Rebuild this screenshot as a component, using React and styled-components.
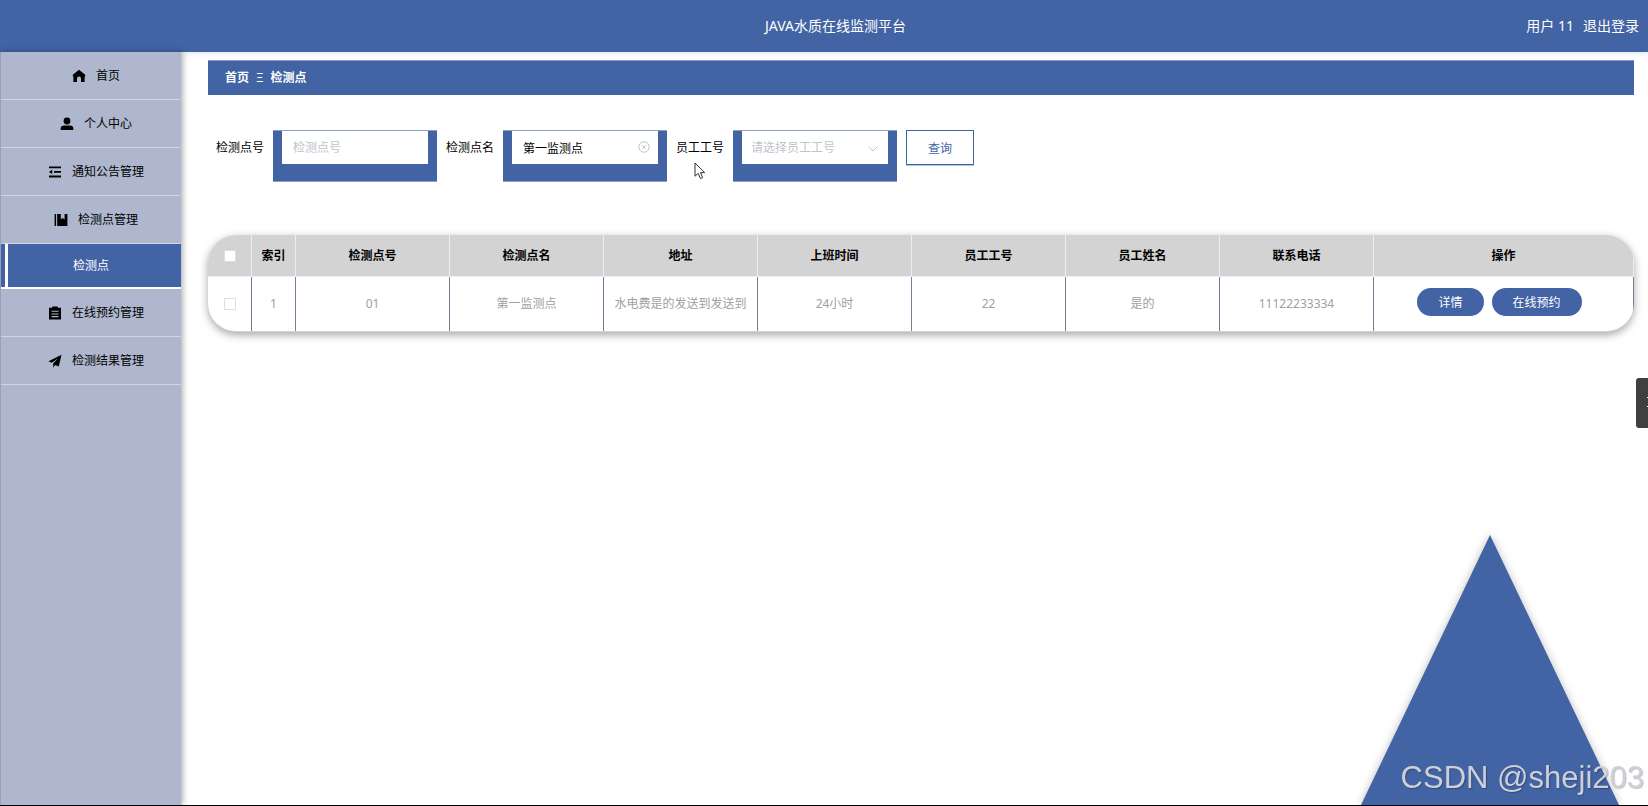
import React, { useState } from "react"
import styled, { createGlobalStyle } from "styled-components"

const BLUE = "#4263a4"

const menu = [
  { label: "首页", icon: "home" },
  { label: "个人中心", icon: "user" },
  { label: "通知公告管理", icon: "list" },
  { label: "检测点管理", icon: "book", children: ["检测点"] },
  { label: "在线预约管理", icon: "clipboard" },
  { label: "检测结果管理", icon: "send" },
]

const columns = ["检测点号", "检测点名", "地址", "上班时间", "员工工号", "员工姓名", "联系电话"]

const rows = [
  ["01", "第一监测点", "水电费是的发送到发送到", "24小时", "22", "是的", "11122233334"],
]

export default function App() {
  const [name, setName] = useState("第一监测点")

  return (
    <>
      <GlobalStyle />
      <Page>
        <Header>
          <HeaderTitle>JAVA水质在线监测平台</HeaderTitle>
          <UserArea>
            <span>用户 11</span>
            <LogoutLink href="#">退出登录</LogoutLink>
          </UserArea>
        </Header>

        <Body>
          <Sidebar>
            {menu.map((item) => (
              <React.Fragment key={item.label}>
                <MenuItem href="#">
                  <MenuIcon name={item.icon} />
                  {item.label}
                </MenuItem>
                {item.children?.map((child) => (
                  <SubItem href="#" key={child}>{child}</SubItem>
                ))}
              </React.Fragment>
            ))}
          </Sidebar>

          <Main>
            <Breadcrumb>
              <Crumb href="#">首页</Crumb>
              <Separator>Ξ</Separator>
              <span>检测点</span>
            </Breadcrumb>

            <SearchForm onSubmit={(e) => e.preventDefault()}>
              <Label htmlFor="pointNo">检测点号</Label>
              <Field>
                <TextField id="pointNo" type="text" placeholder="检测点号" />
              </Field>
              <Label htmlFor="pointName">检测点名</Label>
              <Field>
                <TextField id="pointName" type="text" value={name} onChange={(e) => setName(e.target.value)} />
                <ClearButton type="button" aria-label="clear" onClick={() => setName("")}>
                  <svg width="12" height="12" viewBox="0 0 12 12" fill="none" stroke="#c0c4cc">
                    <circle cx="6" cy="6" r="5.2" />
                    <path d="M4.2 4.2l3.6 3.6M7.8 4.2L4.2 7.8" />
                  </svg>
                </ClearButton>
              </Field>
              <Label htmlFor="staffNo">员工工号</Label>
              <Field>
                <SelectField id="staffNo" defaultValue="">
                  <option value="">请选择员工工号</option>
                  <option value="22">22</option>
                </SelectField>
                <Chevron width="10" height="6" viewBox="0 0 10 6" fill="none" stroke="#c0c4cc">
                  <path d="M0.7 0.7L5 5L9.3 0.7" />
                </Chevron>
              </Field>
              <SearchButton type="submit">查询</SearchButton>
            </SearchForm>

            <TableCard>
              <Table>
                <colgroup>
                  <NarrowCol />
                  <NarrowCol />
                  {columns.map((c) => <col key={c} />)}
                  <ActionCol />
                </colgroup>
                <thead>
                  <tr>
                    <Th><CheckBox type="checkbox" aria-label="全选" /></Th>
                    <Th>索引</Th>
                    {columns.map((c) => <Th key={c}>{c}</Th>)}
                    <Th>操作</Th>
                  </tr>
                </thead>
                <tbody>
                  {rows.map((row, i) => (
                    <tr key={row[0]}>
                      <Td><CheckBox type="checkbox" aria-label="选择" /></Td>
                      <Td>{i + 1}</Td>
                      {row.map((cell, j) => <Td key={j}>{cell}</Td>)}
                      <Td>
                        <RowButton type="button">详情</RowButton>
                        <RowButton type="button">在线预约</RowButton>
                      </Td>
                    </tr>
                  ))}
                </tbody>
              </Table>
            </TableCard>
          </Main>
        </Body>
      </Page>

      <Triangle width="258" height="270" viewBox="0 0 258 270">
        <path d="M129 0L258 270H0z" fill={BLUE} />
      </Triangle>
      <Watermark>CSDN @sheji203</Watermark>
      <SideTab type="button" aria-label="expand">
        <svg width="8" height="12" viewBox="0 0 8 12" fill="none" stroke="#fff">
          <path d="M0 1.5h3L6 6l-3 4.5H0" />
        </svg>
      </SideTab>
      <Pointer width="12" height="18" viewBox="0 0 12 18">
        <path d="M1 1v13.2l3.2-2.8 2.2 5.2 2.3-1-2.2-5h4.2z" fill="#fff" stroke="#333" />
      </Pointer>
    </>
  )
}

const MenuIcon = ({ name }) => (
  <Icon viewBox="0 0 14 14">
    {name === "home" && (
      <path d="M7 0.8L0.8 5.8V7.6h0.6V13H5V9.600a2 2 0 0 1 4 0V13h3.600V7.600h0.600V5.800z" />
    )}
    {name === "user" && (
      <>
        <circle cx="7" cy="4" r="3.4" />
        <path d="M0.7 13v-1.4C0.7 9.4 2.2 8.6 4.2 8.6h5.6c2 0 3.500.8 3.500 3V13z" />
      </>
    )}
    {name === "list" && (
      <path d="M1 1.500h12v1.800H1zM6 6h7v1.800H6zM1 10.600h12v1.800H1zM1 6.900l3.200-2.200v4.400z" />
    )}
    {name === "book" && (
      <path d="M0.6 1h1.500v12H0.600zM3.200 1h3.600v5.500l1.900-1.600 1.900 1.600V1h2.800v12H3.200z" />
    )}
    {name === "clipboard" && (
      <path
        fillRule="evenodd"
        d="M1 1.800h3.200V0.500h5.600v1.300H13V13.500H1zM3.500 4.700v1.100h7V4.700zM3.500 7.400v1.100h7V7.400zM3.500 10.100v1.100h7v-1.100z"
      />
    )}
    {name === "send" && (
      <path d="M13.5 0.800L0.500 7.200l3.300 1.500 6.200-4.500-4.800 5.300v4l2.100-2.600 3.500 1.600z" />
    )}
  </Icon>
)

const GlobalStyle = createGlobalStyle`
  * {
    box-sizing: border-box;
  }

  body {
    margin: 0;
    overflow: hidden;
    background: #ffffff;
    font-family: "Noto Sans", "Noto Sans CJK SC", sans-serif;
    font-size: 12px;
    line-height: 18px;
    color: #000000;
  }

  a {
    color: inherit;
    text-decoration: none;
  }

  button, input, select {
    font-family: inherit;
    font-size: 12px;
  }
`

const Page = styled.div`
  display: flex;
  flex-direction: column;
  min-height: 100vh;
  border-bottom: 1px solid #000000;
`

const Header = styled.header`
  display: grid;
  grid-template-columns: 1fr auto 1fr;
  align-items: center;
  height: 52px;
  padding: 0 9px 0 32px;
  background: ${BLUE};
  color: #ffffff;
  font-size: 14px;
  box-shadow: 0 1px 6px rgba(66, 99, 164, 0.2);
`

const HeaderTitle = styled.div`
  grid-column: 2;
`

const UserArea = styled.div`
  display: flex;
  justify-content: flex-end;
  gap: 9px;
`

const LogoutLink = styled.a`
  :hover {
    cursor: pointer;
  }
`

const Body = styled.div`
  display: flex;
  flex: 1;
`

const Sidebar = styled.nav`
  flex: none;
  width: 182px;
  background: #aeb7cd;
  border-left: 1px solid #98a1b9;
  border-right: 1px solid #c3c8d3;
  box-shadow: 1px 0 6px rgba(0, 0, 0, 0.3);
`

const MenuItem = styled.a`
  display: flex;
  align-items: center;
  justify-content: center;
  gap: 10px;
  height: 48px;
  padding-left: 10px;
  border-bottom: 1px solid #cfd6e0;
`

const SubItem = styled.a`
  display: flex;
  align-items: center;
  justify-content: center;
  position: relative;
  height: 45px;
  padding-top: 1px;
  border-bottom: 2px solid #ffffff;
  background: ${BLUE};
  color: #ffffff;

  &::before {
    content: "";
    position: absolute;
    left: 4px;
    top: 0;
    bottom: 0;
    width: 3px;
    background: #ffffff;
  }
`

const Icon = styled.svg`
  width: 14px;
  height: 14px;
  fill: #000000;
`

const Main = styled.main`
  flex: 1;
  min-width: 0;
  padding: 8px 14px 0 26px;
`

const Breadcrumb = styled.div`
  display: flex;
  align-items: center;
  gap: 7px;
  height: 35px;
  padding: 0 17px;
  border-top: 1px solid #8b9cc0;
  background: ${BLUE};
  color: #ffffff;
  font-weight: 600;
`

const Crumb = styled.a`
  font-weight: 700;
`

const Separator = styled.span`
  font-weight: 400;
`

const SearchForm = styled.form`
  display: flex;
  align-items: flex-start;
  gap: 9px;
  padding: 35px 8px 0;
`

const Label = styled.label`
  line-height: 35px;
`

const Field = styled.div`
  position: relative;
  width: 164px;
  padding: 0 9px 17px;
  border-top: 1px solid #8ba0c4;
  border-bottom: 1px solid #8ba0c4;
  background: ${BLUE};
`

const TextField = styled.input`
  display: block;
  width: 100%;
  height: 33px;
  padding: 0 11px;
  border: none;
  background: #ffffff;
  color: #000000;

  &::placeholder {
    color: #c0c4cc;
  }
`

const SelectField = styled.select`
  display: block;
  width: 100%;
  height: 33px;
  padding: 0 9px;
  border: none;
  border-radius: 0;
  appearance: none;
  background: #ffffff;
  color: #c0c4cc;
`

const ClearButton = styled.button`
  position: absolute;
  top: 10px;
  right: 17px;
  display: flex;
  padding: 0;
  border: none;
  background: none;
`

const Chevron = styled.svg`
  position: absolute;
  top: 15px;
  right: 19px;
  pointer-events: none;
`

const SearchButton = styled.button`
  width: 68px;
  height: 35px;
  border: 1px solid ${BLUE};
  background: #ffffff;
  color: ${BLUE};
  box-shadow: 0 1px 0 #a9c6e0;
`

const TableCard = styled.div`
  margin-top: 53px;
  border-radius: 28px;
  overflow: hidden;
  border-bottom: 1px solid #d3d3d3;
  background: #ffffff;
  box-shadow: 0 3px 9px rgba(0, 0, 0, 0.35);
`

const Table = styled.table`
  width: 100%;
  table-layout: fixed;
  border-collapse: separate;
  border-spacing: 0;
`

const NarrowCol = styled.col`
  width: 44px;
`

const ActionCol = styled.col`
  width: 260px;
`

const Th = styled.th`
  height: 42px;
  padding: 0;
  background: #d3d3d3;
  border-right: 1px solid #ebeef5;
  border-bottom: 1px solid #ebeef5;
  font-weight: 700;
`

const Td = styled.td`
  height: 54px;
  padding: 0;
  border-right: 1px solid #7f7c98;
  color: #a0a0a0;
  text-align: center;
  white-space: nowrap;
`

const CheckBox = styled.input`
  appearance: none;
  display: block;
  width: 12px;
  height: 12px;
  margin: 0 auto;
  border: 1px solid #dcdfe6;
  border-radius: 1px;
  background: #ffffff;
`

const RowButton = styled.button`
  height: 28px;
  margin: 0 8px 5px 0;
  padding: 0 21px;
  border: none;
  border-radius: 14px;
  background: ${BLUE};
  color: #ffffff;
`

const Triangle = styled.svg`
  position: fixed;
  right: 29px;
  bottom: 1px;
  overflow: visible;
  filter: drop-shadow(0 0 4px rgba(0, 0, 0, 0.25));
  clip-path: inset(-10px -10px 0 -10px);
`

const Watermark = styled.div`
  position: fixed;
  right: 4px;
  bottom: 10px;
  font-family: "Liberation Sans", Arial, sans-serif;
  font-size: 31px;
  line-height: 36px;
  color: #cdd0d6;
  text-shadow: 1px 1px 1px rgba(0, 0, 0, 0.25);
`

const SideTab = styled.button`
  position: fixed;
  right: 0;
  top: 378px;
  width: 12px;
  height: 50px;
  padding: 0 0 0 11px;
  border: none;
  border-radius: 3px 0 0 3px;
  overflow: hidden;
  background: #404040;
`

const Pointer = styled.svg`
  position: fixed;
  left: 694px;
  top: 162px;
`
